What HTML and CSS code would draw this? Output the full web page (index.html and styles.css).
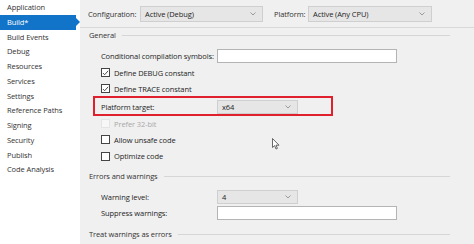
FILE: index.html
```html
<!DOCTYPE html>
<html lang="en">
<head>
    <meta charset="UTF-8">
    <meta name="viewport" content="width=device-width, initial-scale=1.0">
    <title>Build Properties</title>
    <link rel="stylesheet" href="styles.css">
</head>
<body>
    <div class="sidebar">
        <div class="nav-item">Application</div>
        <div class="nav-item active">Build*</div>
        <div class="nav-item">Build Events</div>
        <div class="nav-item">Debug</div>
        <div class="nav-item">Resources</div>
        <div class="nav-item">Services</div>
        <div class="nav-item">Settings</div>
        <div class="nav-item">Reference Paths</div>
        <div class="nav-item">Signing</div>
        <div class="nav-item">Security</div>
        <div class="nav-item">Publish</div>
        <div class="nav-item">Code Analysis</div>
    </div>

    <div class="main">
        <div class="topbar">
            <span class="top-label config-label">Configuration:</span>
            <div class="dropdown config">
                <span>Active (Debug)</span>
                <svg class="chev" width="6" height="4" viewBox="0 0 6 4"><path d="M0.5 0.5 L3 3 L5.5 0.5" fill="none" stroke="#9a9a9a" stroke-width="1"/></svg>
            </div>
            <span class="top-label platform-label">Platform:</span>
            <div class="dropdown platform">
                <span>Active (Any CPU)</span>
                <svg class="chev" width="6" height="4" viewBox="0 0 6 4"><path d="M0.5 0.5 L3 3 L5.5 0.5" fill="none" stroke="#9a9a9a" stroke-width="1"/></svg>
            </div>
        </div>

        <div class="section-head"><span>General</span><div class="rule"></div></div>

        <div class="row row-cond">
            <span class="label">Conditional compilation symbols:</span>
            <div class="textbox"></div>
        </div>
        <div class="row row-debug">
            <span class="check checked"><svg width="8" height="8" viewBox="0 0 8 8"><path d="M1 4 L3 6 L7 1.5" fill="none" stroke="#333" stroke-width="1"/></svg></span>
            <span>Define DEBUG constant</span>
        </div>
        <div class="row row-trace">
            <span class="check checked"><svg width="8" height="8" viewBox="0 0 8 8"><path d="M1 4 L3 6 L7 1.5" fill="none" stroke="#333" stroke-width="1"/></svg></span>
            <span>Define TRACE constant</span>
        </div>

        <div class="highlight">
            <span class="label">Platform target:</span>
            <div class="dropdown small">
                <span>x64</span>
                <svg class="chev" width="6" height="4" viewBox="0 0 6 4"><path d="M0.5 0.5 L3 3 L5.5 0.5" fill="none" stroke="#9a9a9a" stroke-width="1"/></svg>
            </div>
        </div>

        <div class="row row-prefer disabled">
            <span class="check"></span>
            <span>Prefer 32-bit</span>
        </div>
        <div class="row row-unsafe">
            <span class="check"></span>
            <span>Allow unsafe code</span>
        </div>
        <div class="row row-optimize">
            <span class="check"></span>
            <span>Optimize code</span>
        </div>

        <div class="section-head errors"><span>Errors and warnings</span><div class="rule"></div></div>

        <div class="row row-level">
            <span class="label">Warning level:</span>
            <div class="dropdown small">
                <span>4</span>
                <svg class="chev" width="6" height="4" viewBox="0 0 6 4"><path d="M0.5 0.5 L3 3 L5.5 0.5" fill="none" stroke="#9a9a9a" stroke-width="1"/></svg>
            </div>
        </div>
        <div class="row row-suppress">
            <span class="label">Suppress warnings:</span>
            <div class="textbox"></div>
        </div>

        <div class="section-head treat"><span>Treat warnings as errors</span><div class="rule"></div></div>

        <!-- mouse pointer -->
        <svg class="cursor" width="8" height="12" viewBox="0 0 8 12">
            <path d="M0.5 0.5 L0.5 9.5 L2.6 7.6 L4 11 L5.4 10.4 L4 7.2 L7 7.2 Z" fill="#fff" stroke="#444" stroke-width="0.8"/>
        </svg>
    </div>
</body>
</html>
```

FILE: styles.css
```css
/* General */
body {
    margin: 0;
    width: 474px;
    height: 244px;
    display: flex;
    font-family: 'Open Sans', 'Noto Sans', sans-serif;
    font-size: 7.5px;
    letter-spacing: -0.1px;
    color: #1e1e1e;
    overflow: hidden;
    background: #f0f0f0;
    white-space: nowrap;
}

/* Sidebar */
.sidebar {
    width: 80px;
    flex-shrink: 0;
    background: #ffffff;
}

.nav-item {
    height: 14.75px;
    line-height: 14.75px;
    padding-left: 7px;
    color: #333;
    position: relative;
}

.nav-item.active {
    width: 69px;
    background: #1174c8;
    color: #fff;
}

.nav-item.active::after {
    content: "";
    position: absolute;
    right: -4px;
    top: 3px;
    border-top: 4px solid transparent;
    border-bottom: 4px solid transparent;
    border-left: 4px solid #1174c8;
}

/* Main panel */
.main {
    flex: 1;
    position: relative;
    background: #f0f0f0;
}

.topbar {
    height: 27px;
    border-bottom: 1px solid #d9d9d9;
    display: flex;
    align-items: center;
    padding-left: 8px;
}

.top-label {
    color: #333;
}

.config-label {
    width: 52px;
}

.platform-label {
    margin-left: 11px;
    width: 34px;
}

.dropdown {
    height: 14px;
    background: #e6e6e6;
    border: 1px solid #cfcfcf;
    display: flex;
    align-items: center;
    justify-content: space-between;
    padding: 0 6px 0 4px;
    box-sizing: border-box;
}

.dropdown.config {
    width: 123px;
    height: 16px;
}

.dropdown.platform {
    width: 124px;
    height: 16px;
}

.dropdown.small {
    width: 81px;
}

.chev {
    display: block;
}

/* Section headings */
.section-head {
    height: 14px;
    display: flex;
    align-items: center;
    padding-left: 9px;
    padding-right: 24px;
    color: #333;
}

.section-head .rule {
    flex: 1;
    height: 1px;
    background: #d6d6d6;
    margin-left: 6px;
}

.section-head.errors {
    margin-top: 5px;
}

.section-head.treat {
    margin-top: 6px;
}

/* Rows */
.row {
    display: flex;
    align-items: center;
    padding-left: 21px;
}

.row-cond { height: 16px; margin-top: 6px; }
.row-debug { height: 17px; }
.row-trace { height: 15px; }
.row-prefer { height: 15px; }
.row-unsafe { height: 17px; }
.row-optimize { height: 16px; }
.row-level { height: 15px; margin-top: 6px; }
.row-suppress { height: 16px; margin-top: 1px; }

.label {
    width: 116px;
    flex-shrink: 0;
}

.textbox {
    width: 180px;
    height: 14px;
    background: #fff;
    border: 1px solid #b4b4b4;
    box-sizing: border-box;
}

.check {
    width: 9px;
    height: 9px;
    border: 1px solid #444;
    background: #fff;
    margin-right: 4px;
    display: flex;
    align-items: center;
    justify-content: center;
    box-sizing: border-box;
}

.disabled {
    color: #a8a8a8;
}

.disabled .check {
    border-color: #e4e4e4;
    background: #f7f7f7;
}

/* Red outline around platform target */
.highlight {
    margin-left: 13px;
    width: 240px;
    height: 20px;
    border: 2px solid #e0202c;
    box-sizing: border-box;
    display: flex;
    align-items: center;
    padding-left: 6px;
    padding-top: 1px;
}

.cursor {
    position: absolute;
    left: 192px;
    top: 138px;
}
```
